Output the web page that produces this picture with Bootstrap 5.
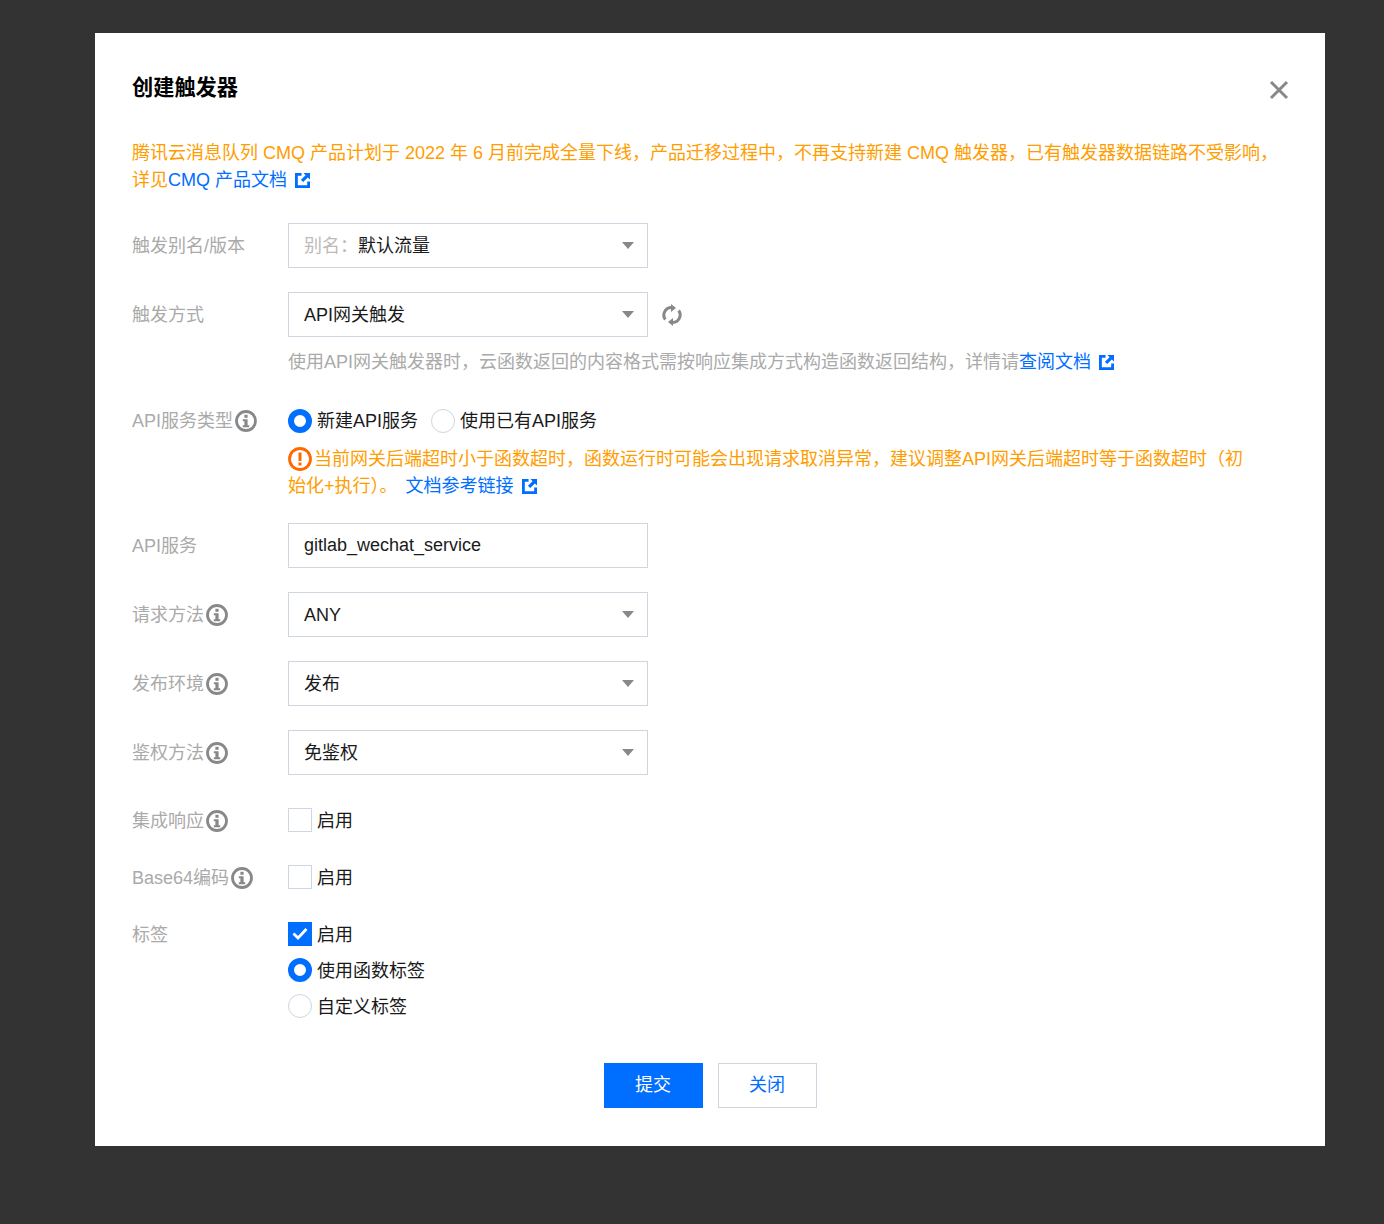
<!DOCTYPE html>
<html lang="zh-CN">
<head>
<meta charset="utf-8">
<title>创建触发器</title>
<link href="https://cdn.jsdelivr.net/npm/bootstrap@5.3.0/dist/css/bootstrap.min.css" rel="stylesheet">
<style>
html,body{height:100%}
body{background:#333;font-family:"Liberation Sans","Noto Sans CJK SC",sans-serif;font-size:18px;line-height:27px;color:#1a1a1a;overflow:hidden}
.dlg{position:relative;width:1230px;height:1113px;margin:33px 0 0 95px;background:#fff;padding:41px 37px 0}
.dlg-title{font-size:21.2px;font-weight:700;line-height:27px;color:#000;margin:0}
.dlg-x{position:absolute;top:47px;right:36px;padding:0;border:0;background:none;line-height:0}
.warn{color:#ff9d00}
.tlink{color:#006eff;text-decoration:none}
.notice{width:1150px;margin:39px 0 29px}
.f-row{margin-bottom:24px}
.choice{margin-top:28px}
.f-label{width:156px;flex:none;color:#aaa;display:flex;align-items:center;height:45px;padding-top:2px}
.f-label svg{margin-left:2px;margin-top:-2px}
.choice .f-label{height:33px}
.f-ctl{width:360px;height:45px;border:1px solid #cfd5de;border-radius:0;padding:1px 13px 0 15px;font-size:18px;line-height:27px;color:#1a1a1a;background:#fff}
.f-ctl svg{margin-top:-1px}
.ph{color:#bbb}
.hint{color:#aaa;margin-top:12px}
.choice-line{height:33px}
.opt-text{padding-top:2px}
.box{width:24px;height:24px;border:1px solid #cfd5de;background:#fff;flex:none;margin-right:5px;margin-top:-2px}
.box.on{background:#006eff;border-color:#006eff}
.dot{width:24px;height:24px;border-radius:50%;border:1px solid #cfd5de;background:#fff;flex:none;margin-right:5px}
.dot.on{border:6px solid #006eff}
.pair-gap{margin-right:13px}
.sub-group{padding-top:1px}
.sub-line{height:36px}
.help{width:960px;margin-top:9px;margin-bottom:23px;color:#ff9d00}
.i-warn{vertical-align:-6px;margin-right:2px}
.i-ext{vertical-align:-2px;margin-left:8px}
.ref-link{margin-left:8px}
.spin{margin-left:14px}
.foot{margin-top:39px;gap:15px;padding-left:1px}
.act{width:99px;height:45px;border-radius:0;font-size:18px;line-height:43px;padding:0 1px 0 0}
.act-main,.act-main:hover{background:#006eff;border:1px solid #006eff;color:#fff}
.act-sub,.act-sub:hover{background:#fff;border:1px solid #cfd5de;color:#006eff}
.rule-gap{margin-top:29px}
</style>
</head>
<body>
<svg width="0" height="0" class="d-none" aria-hidden="true">
<symbol id="ext" viewBox="0 0 16 16"><path d="M7 0H0v16h16V9h-3v4H3V3h4z" fill="#006eff"/><path d="M9 0h7v7l-2.300-2.300-5 5-2.400-2.400 5-5z" fill="#006eff"/></symbol>
<symbol id="inf" viewBox="0 0 22 22"><circle cx="11" cy="11" r="9.500" fill="none" stroke="#888" stroke-width="2.800"/><rect x="9.400" y="4.800" width="3.200" height="3" fill="#888"/><path d="M7.800 9.200h4.800v6h1.600v2.100H7.800v-2.100h1.600v-3.900H7.800z" fill="#888"/></symbol>
<symbol id="caret" viewBox="0 0 12 7"><path d="M0 0h12L6 7z" fill="#888"/></symbol>
</svg>
<div class="dlg">
  <h5 class="dlg-title">创建触发器</h5>
  <button class="dlg-x" type="button" aria-label="关闭"><svg width="20" height="20" viewBox="0 0 20 20"><path d="M2 2l16 16M18 2L2 18" stroke="#888" stroke-width="3" fill="none"/></svg></button>

  <div class="notice warn">腾讯云消息队列 CMQ 产品计划于 2022 年 6 月前完成全量下线，产品迁移过程中，不再支持新建 CMQ 触发器，已有触发器数据链路不受影响，详见<a class="tlink" href="#">CMQ 产品文档<svg class="i-ext" width="15" height="15"><use href="#ext"/></svg></a></div>

  <div class="d-flex f-row">
    <div class="f-label">触发别名/版本</div>
    <div class="f-ctl d-flex align-items-center justify-content-between"><span><span class="ph">别名：</span>默认流量</span><svg width="12" height="7"><use href="#caret"/></svg></div>
  </div>

  <div class="d-flex">
    <div class="f-label">触发方式</div>
    <div>
      <div class="d-flex align-items-center">
        <div class="f-ctl d-flex align-items-center justify-content-between"><span>API网关触发</span><svg width="12" height="7"><use href="#caret"/></svg></div>
        <svg class="spin" width="20" height="22" viewBox="0 0 20 22"><path d="M3.300 15.500A7.500 7.500 0 0 1 9.500 3.600" fill="none" stroke="#888" stroke-width="3"/><path d="M9 0l5 4-5 4z" fill="#888"/><path d="M16.700 6.500A7.500 7.500 0 0 1 10.500 18.400" fill="none" stroke="#888" stroke-width="3"/><path d="M11 22l-5-4 5-4z" fill="#888"/></svg>
      </div>
      <div class="hint">使用API网关触发器时，云函数返回的内容格式需按响应集成方式构造函数返回结构，详情请<a class="tlink" href="#">查阅文档<svg class="i-ext" width="15" height="15"><use href="#ext"/></svg></a></div>
    </div>
  </div>

  <div class="d-flex choice">
    <div class="f-label">
      <span>API服务类型</span><svg width="22" height="22"><use href="#inf"/></svg>
    </div>
    <div>
      <div class="d-flex align-items-center choice-line">
        <span class="dot on"></span><span class="pair-gap opt-text">新建API服务</span>
        <span class="dot"></span><span class="opt-text">使用已有API服务</span>
      </div>
      <div class="help"><svg class="i-warn" width="24" height="24" viewBox="0 0 24 24"><circle cx="12" cy="12" r="10.500" fill="none" stroke="#ff6a00" stroke-width="2.800"/><rect x="10.500" y="5.500" width="3" height="8.500" fill="#ff6a00"/><rect x="10.500" y="15.500" width="3" height="3" fill="#ff6a00"/></svg>当前网关后端超时小于函数超时，函数运行时可能会出现请求取消异常，建议调整API网关后端超时等于函数超时（初始化+执行）。<a class="tlink ref-link" href="#">文档参考链接<svg class="i-ext" width="15" height="15"><use href="#ext"/></svg></a></div>
    </div>
  </div>

  <div class="d-flex f-row">
    <div class="f-label">API服务</div>
    <div class="f-ctl d-flex align-items-center pt-0">gitlab_wechat_service</div>
  </div>
  <div class="d-flex f-row">
    <div class="f-label">请求方法<svg width="22" height="22"><use href="#inf"/></svg></div>
    <div class="f-ctl d-flex align-items-center justify-content-between"><span>ANY</span><svg width="12" height="7"><use href="#caret"/></svg></div>
  </div>
  <div class="d-flex f-row">
    <div class="f-label">发布环境<svg width="22" height="22"><use href="#inf"/></svg></div>
    <div class="f-ctl d-flex align-items-center justify-content-between"><span>发布</span><svg width="12" height="7"><use href="#caret"/></svg></div>
  </div>
  <div class="d-flex">
    <div class="f-label">鉴权方法<svg width="22" height="22"><use href="#inf"/></svg></div>
    <div class="f-ctl d-flex align-items-center justify-content-between"><span>免鉴权</span><svg width="12" height="7"><use href="#caret"/></svg></div>
  </div>

  <div class="d-flex choice rule-gap">
    <div class="f-label">集成响应<svg width="22" height="22"><use href="#inf"/></svg></div>
    <div class="d-flex align-items-center choice-line"><span class="box"></span><span class="opt-text">启用</span></div>
  </div>
  <div class="d-flex choice mt-4">
    <div class="f-label">Base64编码<svg width="22" height="22"><use href="#inf"/></svg></div>
    <div class="d-flex align-items-center choice-line"><span class="box"></span><span class="opt-text">启用</span></div>
  </div>
  <div class="d-flex choice mt-4">
    <div class="f-label">标签</div>
    <div>
      <div class="d-flex align-items-center choice-line"><span class="box on d-flex align-items-center justify-content-center"><svg width="16" height="13" viewBox="0 0 16 13"><path d="M1.500 6.500l4.500 4.500 8.500-9" fill="none" stroke="#fff" stroke-width="2.800"/></svg></span><span class="opt-text">启用</span></div>
      <div class="sub-group">
        <div class="d-flex align-items-center sub-line"><span class="dot on"></span><span class="opt-text">使用函数标签</span></div>
        <div class="d-flex align-items-center sub-line"><span class="dot"></span><span class="opt-text">自定义标签</span></div>
      </div>
    </div>
  </div>

  <div class="d-flex justify-content-center foot">
    <button type="button" class="btn act act-main">提交</button>
    <button type="button" class="btn act act-sub">关闭</button>
  </div>
</div>
<script src="https://cdn.jsdelivr.net/npm/bootstrap@5.3.0/dist/js/bootstrap.bundle.min.js"></script>
</body>
</html>
